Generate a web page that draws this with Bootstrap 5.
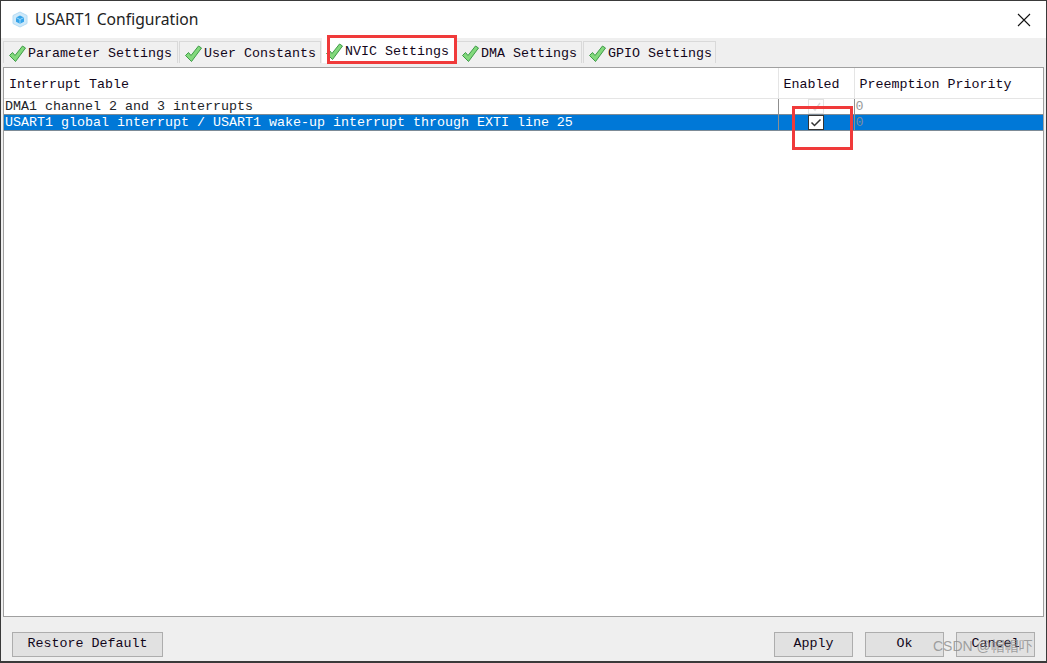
<!DOCTYPE html>
<html lang="en">
<head>
<meta charset="utf-8">
<title>USART1 Configuration</title>
<link rel="stylesheet" href="https://cdn.jsdelivr.net/npm/bootstrap@5.3.0/dist/css/bootstrap.min.css">
<style>
html,body{height:663px;overflow:hidden;margin:0}
body{background:#efefef;font-family:"Liberation Mono",monospace;font-size:13.33px;color:#12061a}
.win{position:relative;height:663px;border:1px solid #3a3a3a;border-width:1px 1px 2px 1px;box-sizing:border-box}
.titlebar{height:37px;background:#fff;padding-left:11px}
.titletxt{font-family:"Noto Sans",sans-serif;font-size:15.7px;color:#222;margin-left:7px;margin-top:1px}
.xbtn{width:14px;height:14px;margin-right:15px}
.tabstrip{height:29px;padding:3px 0 0 2px;background:#efefef;border:0;flex-wrap:nowrap;align-items:flex-start}
.tabitem{height:22px;background:#f0f0f0;border:1px solid #d9d9d9;border-bottom:0;display:flex;align-items:center;padding-left:4px;padding-top:2px;margin-right:1px;white-space:nowrap;line-height:20px}
.tabitem svg{margin-right:1px;flex:none}
.tabitem.tabon{background:#fff;height:25px;margin-top:-3px;border-color:#fff;padding-left:2px;padding-top:1px;padding-bottom:0;margin-right:0}
.t1{width:175px}.t2{width:142px}.t3{width:134px}.t4{width:126px}.t5{width:133px}
.panel{height:550px;margin:0 2px;background:#fff;border:1px solid #a0a0a0}
.tbl{table-layout:fixed;width:100%;margin:0;--bs-table-bg:transparent;border-collapse:collapse}
.tbl th,.tbl td{padding:0;border:0;font-weight:400;box-shadow:none;vertical-align:middle;white-space:nowrap;overflow:hidden;background:transparent;color:inherit;font-size:13.33px}
.tbl th{height:30px;border-bottom:1px solid #e5e5e5;padding-left:5px;padding-top:5px;color:#12061a}
.tbl th.hd{border-left:1px solid #e5e5e5}
.tbl td{height:16px;line-height:15px;padding-left:1px}
.tbl tr.rowa td{height:15px}
.tbl tr.sel td{height:15px;background:#0078d7;color:#fff;border-top:1px solid #7d8b96;border-bottom:1px solid #7d8b96}
.tbl td.cchk{border-left:1px solid #8f8f8f;padding:0;text-align:center}
.tbl td.cnum{border-left:1px solid #8f8f8f;color:#9a9a9a;padding-left:1px}
.tbl tr.sel td.cnum{color:#7f8c9a}
.cbx{display:block;width:16px;height:15px;margin:0 auto;background:#fff;border:1px solid #e3e3e3}
.sel .cbx{border-color:#333}
.foot{padding:15px 11px 0 11px;gap:12px}
.bt{height:25px;width:79px;padding:0 0 2px;background:#e1e1e1;border:1px solid #adadad;border-radius:0;font-family:"Liberation Mono",monospace;font-size:13.33px;color:#12061a;line-height:21px}
.bt.wide{width:151px}
.redbox{position:absolute;border:3px solid #f03a3a;pointer-events:none}
.rb1{left:326px;top:34px;width:130px;height:29px}
.rb2{left:791px;top:105px;width:61px;height:44px}
.wmark{position:absolute;left:932px;top:635px;font-family:"Liberation Sans","Noto Sans CJK SC",sans-serif;font-size:14px;color:rgba(140,140,140,.8);white-space:nowrap;pointer-events:none}
</style>
</head>
<body>
<div class="win d-flex flex-column">
  <div class="titlebar d-flex align-items-center justify-content-between">
    <div class="d-flex align-items-center">
      <svg width="16" height="17" viewBox="0 0 16 17"><path d="M8 1 15 4.500V12.500L8 16 1 12.500V4.500Z" fill="#cfe9f9" stroke="#b4dcf5"/><path d="M8 4.500 12 6.500V10.800L8 12.800 4 10.800V6.500Z" fill="#35a4ea"/><path d="M8 8.500V12.800M4 6.500 8 8.500 12 6.500" stroke="#9fd8f8" fill="none"/></svg>
      <span class="titletxt">USART1 Configuration</span>
    </div>
    <svg class="xbtn" viewBox="0 0 14 14"><path d="M1 1 13 13M13 1 1 13" stroke="#111" stroke-width="1.100" fill="none"/></svg>
  </div>
  <ul class="nav tabstrip">
    <li class="tabitem t1"><svg width="19" height="18" viewBox="0 0 19 18"><path d="M1.500 10.500 4.500 7.500 7 10.500 14.500 1 17.500 3 7.500 16.500Z" fill="#82d97c" stroke="#3f9b48" stroke-linejoin="round"/></svg>Parameter Settings</li>
    <li class="tabitem t2"><svg width="19" height="18" viewBox="0 0 19 18"><path d="M1.500 10.500 4.500 7.500 7 10.500 14.500 1 17.500 3 7.500 16.500Z" fill="#82d97c" stroke="#3f9b48" stroke-linejoin="round"/></svg>User Constants</li>
    <li class="tabitem tabon t3"><svg width="19" height="18" viewBox="0 0 19 18"><path d="M1.500 10.500 4.500 7.500 7 10.500 14.500 1 17.500 3 7.500 16.500Z" fill="#82d97c" stroke="#3f9b48" stroke-linejoin="round"/></svg>NVIC Settings</li>
    <li class="tabitem t4"><svg width="19" height="18" viewBox="0 0 19 18"><path d="M1.500 10.500 4.500 7.500 7 10.500 14.500 1 17.500 3 7.500 16.500Z" fill="#82d97c" stroke="#3f9b48" stroke-linejoin="round"/></svg>DMA Settings</li>
    <li class="tabitem t5"><svg width="19" height="18" viewBox="0 0 19 18"><path d="M1.500 10.500 4.500 7.500 7 10.500 14.500 1 17.500 3 7.500 16.500Z" fill="#82d97c" stroke="#3f9b48" stroke-linejoin="round"/></svg>GPIO Settings</li>
  </ul>
  <div class="panel">
    <table class="table tbl">
      <colgroup><col style="width:774px"><col style="width:76px"><col></colgroup>
      <thead><tr><th>Interrupt Table</th><th class="hd">Enabled</th><th class="hd">Preemption Priority</th></tr></thead>
      <tbody>
        <tr class="rowa"><td>DMA1 channel 2 and 3 interrupts</td><td class="cchk"><span class="cbx"><svg width="14" height="13" viewBox="0 0 14 13" class="d-block"><path d="M3 7 6 10 11 3" stroke="#dcdcdc" stroke-width="1.500" fill="none"/></svg></span></td><td class="cnum">0</td></tr>
        <tr class="sel"><td>USART1 global interrupt / USART1 wake-up interrupt through EXTI line 25</td><td class="cchk"><span class="cbx"><svg width="14" height="13" viewBox="0 0 14 13" class="d-block"><path d="M2.500 6.500 5.500 9.500 11.500 3.500" stroke="#333" stroke-width="1.500" fill="none"/></svg></span></td><td class="cnum">0</td></tr>
      </tbody>
    </table>
  </div>
  <div class="foot d-flex">
    <button type="button" class="btn bt wide me-auto">Restore Default</button>
    <button type="button" class="btn bt">Apply</button>
    <button type="button" class="btn bt">Ok</button>
    <button type="button" class="btn bt">Cancel</button>
  </div>
  <div class="redbox rb1"></div>
  <div class="redbox rb2"></div>
  <div class="wmark">CSDN @帽帽吓</div>
</div>
<script src="https://cdn.jsdelivr.net/npm/bootstrap@5.3.0/dist/js/bootstrap.bundle.min.js"></script>
</body>
</html>
